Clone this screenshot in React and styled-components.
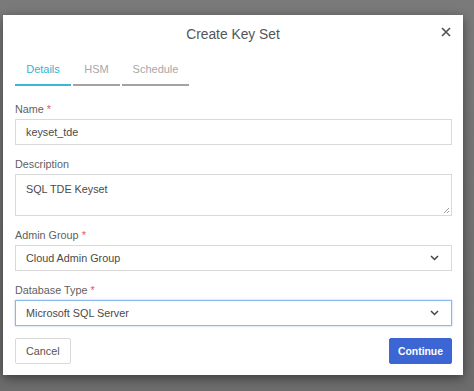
import React from "react";
import styled, { createGlobalStyle } from "styled-components";

const GlobalStyle = createGlobalStyle`
  html, body {
    margin: 0;
    padding: 0;
    background: #6f6f6f;
    font-family: "Liberation Sans", Arial, sans-serif;
  }
`;

const Page = styled.div`
  width: 474px;
  height: 391px;
  padding: 15px 0 0 3px;
  box-sizing: border-box;
  background: linear-gradient(#7a7a7a, #6c6c6c);
  overflow: hidden;
`;

const Modal = styled.div`
  width: 460px;
  height: 360px;
  background: #fff;
  box-sizing: border-box;
  box-shadow: 0 3px 10px rgba(0, 0, 0, 0.45);
  display: flex;
  flex-direction: column;
`;

const Header = styled.div`
  position: relative;
  flex-shrink: 0;
  height: 37px;
  display: flex;
  align-items: center;
  justify-content: center;
  padding-top: 1px;
  box-sizing: border-box;
`;

const Title = styled.div`
  font-size: 13.8px;
  color: #555;
`;

const Close = styled.div`
  position: absolute;
  right: 10px;
  top: 10px;
  width: 14px;
  height: 14px;
  display: flex;
  align-items: center;
  justify-content: center;
`;

const Body = styled.div`
  padding: 0 11px 0 12px;
  display: flex;
  flex-direction: column;
  flex-shrink: 0;
`;

const Tabs = styled.div`
  display: flex;
  gap: 2px;
`;

const Tab = styled.div`
  height: 34px;
  box-sizing: border-box;
  width: ${(p) => p.$w}px;
  display: flex;
  justify-content: center;
  padding-top: 10px;
  line-height: 14px;
  font-size: 11px;
  color: ${(p) => (p.$active ? "#35b3d0" : "#a8a8a8")};
  border-bottom: 2px solid ${(p) => (p.$active ? "#3cb8d4" : "#a3a3a3")};
`;

const Field = styled.div`
  display: flex;
  flex-direction: column;
  margin-top: ${(p) => p.$mt}px;
`;

const Label = styled.div`
  font-size: 10.8px;
  color: #5f5f5f;
  height: 14px;
  line-height: 14px;
  margin-bottom: 3px;
`;

const Req = styled.span`
  color: #e0556a;
  margin-left: 3px;
`;

const Input = styled.div`
  height: 26px;
  box-sizing: border-box;
  border: 1px solid ${(p) => (p.$focus ? "#8ab8e8" : "#d9d9d9")};
  box-shadow: ${(p) => (p.$focus ? "0 0 2px rgba(90,150,220,0.5)" : "none")};
  display: flex;
  align-items: center;
  justify-content: space-between;
  padding: 0 12px 0 10px;
  font-size: 10.8px;
  color: #4a4a4a;
`;

const TextArea = styled.div`
  position: relative;
  height: 42px;
  box-sizing: border-box;
  border: 1px solid #d9d9d9;
  padding: 8px 10px;
  font-size: 10.8px;
  color: #4a4a4a;
`;

const Grip = styled.svg`
  position: absolute;
  right: 1px;
  bottom: 1px;
`;

const Footer = styled.div`
  display: flex;
  justify-content: space-between;
  margin-top: 12px;
`;

const Button = styled.div`
  height: 26px;
  box-sizing: border-box;
  padding: 0 ${(p) => (p.$primary ? 8 : 10)}px;
  display: flex;
  align-items: center;
  font-size: ${(p) => (p.$primary ? 10.4 : 10.8)}px;
  border-radius: 2px;
  background: ${(p) => (p.$primary ? "#3b66d3" : "#fff")};
  color: ${(p) => (p.$primary ? "#fff" : "#555")};
  border: 1px solid ${(p) => (p.$primary ? "#3b66d3" : "#d9d9d9")};
  font-weight: ${(p) => (p.$primary ? 700 : 400)};
`;

const Chevron = () => (
  <svg width="9" height="6" viewBox="0 0 9 6">
    <path d="M1 1 L4.5 4.5 L8 1" fill="none" stroke="#444" strokeWidth="1.5" />
  </svg>
);

export default function App() {
  return (
    <>
      <GlobalStyle />
      <Page>
        <Modal>
          <Header>
            <Title>Create Key Set</Title>
            <Close>
              <svg width="10" height="10" viewBox="0 0 10 10">
                <path d="M1 1 L9 9 M9 1 L1 9" stroke="#555" strokeWidth="1.7" />
              </svg>
            </Close>
          </Header>
          <Body>
            <Tabs>
              <Tab $active $w={56}>Details</Tab>
              <Tab $w={47}>HSM</Tab>
              <Tab $w={67}>Schedule</Tab>
            </Tabs>
            <Field $mt={16}>
              <Label>
                Name<Req>*</Req>
              </Label>
              <Input>keyset_tde</Input>
            </Field>
            <Field $mt={12}>
              <Label>Description</Label>
              <TextArea>
                SQL TDE Keyset
                <Grip width="8" height="8" viewBox="0 0 8 8">
                  <path d="M7 2 L2 7 M7 5 L5 7" stroke="#999" strokeWidth="1" />
                </Grip>
              </TextArea>
            </Field>
            <Field $mt={12}>
              <Label>
                Admin Group<Req>*</Req>
              </Label>
              <Input>
                Cloud Admin Group
                <Chevron />
              </Input>
            </Field>
            <Field $mt={12}>
              <Label>
                Database Type<Req>*</Req>
              </Label>
              <Input $focus>
                Microsoft SQL Server
                <Chevron />
              </Input>
            </Field>
            <Footer>
              <Button>Cancel</Button>
              <Button $primary>Continue</Button>
            </Footer>
          </Body>
        </Modal>
      </Page>
    </>
  );
}
